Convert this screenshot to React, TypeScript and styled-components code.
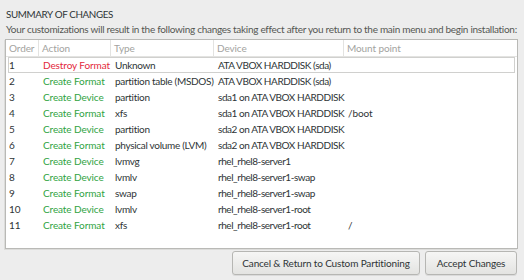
import React from "react";
import styled, { createGlobalStyle } from "styled-components";

const Global = createGlobalStyle`
  html, body { margin: 0; padding: 0; background: #ededed; }
  body { font-family: Lato, "Noto Sans", "DejaVu Sans", sans-serif; }
  * { box-sizing: border-box; }
`;

const Page = styled.div`
  width: 524px;
  height: 280px;
  background: #ededed;
  padding: 7px 6px 0 5px;
  display: flex;
  flex-direction: column;
  overflow: hidden;
`;

const Title = styled.div`
  font-size: 9.8px;
  line-height: 14px;
  color: #2e3436;
  padding-left: 1px;
  letter-spacing: -0.35px;
`;

const Subtitle = styled.div`
  font-size: 10px;
  line-height: 14px;
  color: #555753;
  padding-left: 1px;
  margin-top: 1px;
  white-space: nowrap;
  letter-spacing: -0.29px;
`;

const Frame = styled.div`
  margin-top: 3px;
  height: 210px;
  background: #ffffff;
  border: 1px solid #b9b9b6;
  box-shadow: -1px 1px 0 #dcdcda;
`;

const Grid = styled.div`
  display: grid;
  grid-template-columns: 32px 72px 103px 130px 1fr;
`;

const HeadCell = styled.div<{ $first?: boolean }>`
  height: 17px;
  line-height: 16px;
  font-size: 10px;
  letter-spacing: -0.1px;
  color: #a3a3a0;
  padding-left: 3px;
  border-left: ${(p) => (p.$first ? "none" : "1px solid #e3e3e1")};
  border-bottom: 1px solid #e3e3e1;
  white-space: nowrap;
`;

const Row = styled.div<{ $focus?: boolean }>`
  display: grid;
  grid-template-columns: 32px 72px 103px 130px 1fr;
  height: 16px;
  margin: 0 2px;
  outline: ${(p) => (p.$focus ? "1px solid #d0d0ce" : "none")};
  outline-offset: -1px;
`;

const Cell = styled.div<{ $tone?: "red" | "green" }>`
  font-size: 10px;
  letter-spacing: -0.1px;
  line-height: 16px;
  padding-left: 1px;
  white-space: nowrap;
  overflow: visible;
  color: ${(p) =>
    p.$tone === "red" ? "#e3283b" : p.$tone === "green" ? "#2fa33f" : "#2e3436"};
`;

const ActionCell = styled(Cell)`
  padding-left: 3px;
`;

const TypeCell = styled(Cell)`
  padding-left: 3px;
  letter-spacing: -0.3px;
`;

const DeviceCell = styled(Cell)`
  padding-left: 3px;
  letter-spacing: -0.45px;
`;

const MountCell = styled(Cell)`
  padding-left: 3px;
`;

const Buttons = styled.div`
  display: flex;
  justify-content: flex-end;
  gap: 5px;
  margin-top: 2px;
  padding-right: 1px;
`;

const Button = styled.button<{ $w: number }>`
  width: ${(p) => p.$w}px;
  height: 24px;
  font-family: inherit;
  font-size: 10px;
  letter-spacing: -0.15px;
  color: #2e3436;
  background: linear-gradient(#f6f6f5, #e3e3e1);
  border: 1px solid #b6b6b3;
  border-radius: 3px;
  box-shadow: 0 1px 0 rgba(0, 0, 0, 0.08);
  padding: 0;
`;

type Change = {
  order: number;
  action: string;
  type: string;
  device: string;
  mount?: string;
};

const changes: Change[] = [
  { order: 1, action: "Destroy Format", type: "Unknown", device: "ATA VBOX HARDDISK (sda)" },
  { order: 2, action: "Create Format", type: "partition table (MSDOS)", device: "ATA VBOX HARDDISK (sda)" },
  { order: 3, action: "Create Device", type: "partition", device: "sda1 on ATA VBOX HARDDISK" },
  { order: 4, action: "Create Format", type: "xfs", device: "sda1 on ATA VBOX HARDDISK", mount: "/boot" },
  { order: 5, action: "Create Device", type: "partition", device: "sda2 on ATA VBOX HARDDISK" },
  { order: 6, action: "Create Format", type: "physical volume (LVM)", device: "sda2 on ATA VBOX HARDDISK" },
  { order: 7, action: "Create Device", type: "lvmvg", device: "rhel_rhel8-server1" },
  { order: 8, action: "Create Device", type: "lvmlv", device: "rhel_rhel8-server1-swap" },
  { order: 9, action: "Create Format", type: "swap", device: "rhel_rhel8-server1-swap" },
  { order: 10, action: "Create Device", type: "lvmlv", device: "rhel_rhel8-server1-root" },
  { order: 11, action: "Create Format", type: "xfs", device: "rhel_rhel8-server1-root", mount: "/" },
];

export default function App() {
  return (
    <>
      <Global />
      <Page>
        <Title>SUMMARY OF CHANGES</Title>
        <Subtitle>
          Your customizations will result in the following changes taking effect after you return to the main menu and begin installation:
        </Subtitle>
        <Frame>
          <Grid>
            <HeadCell $first>Order</HeadCell>
            <HeadCell>Action</HeadCell>
            <HeadCell>Type</HeadCell>
            <HeadCell>Device</HeadCell>
            <HeadCell>Mount point</HeadCell>
          </Grid>
          {changes.map((c) => (
            <Row key={c.order} $focus={c.order === 1}>
              <Cell>{c.order}</Cell>
              <ActionCell $tone={c.action.startsWith("Destroy") ? "red" : "green"}>{c.action}</ActionCell>
              <TypeCell>{c.type}</TypeCell>
              <DeviceCell>{c.device}</DeviceCell>
              <MountCell>{c.mount ?? ""}</MountCell>
            </Row>
          ))}
        </Frame>
        <Buttons>
          <Button $w={188}>Cancel &amp; Return to Custom Partitioning</Button>
          <Button $w={92}>Accept Changes</Button>
        </Buttons>
      </Page>
    </>
  );
}
